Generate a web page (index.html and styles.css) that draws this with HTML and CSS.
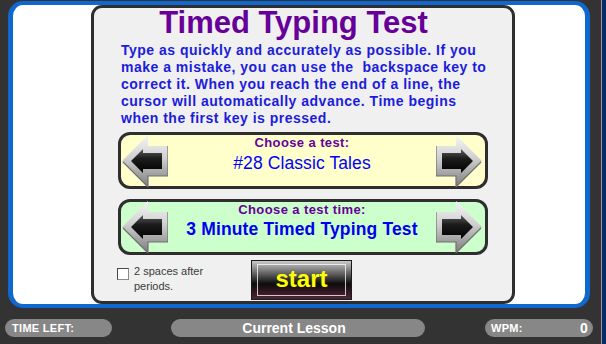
FILE: index.html
```html
<!DOCTYPE html>
<html>
<head>
<meta charset="utf-8">
<title>Timed Typing Test</title>
<link rel="stylesheet" href="styles.css">
</head>
<body>
<div class="app">
  <div class="frame">
    <div class="panel">
      <h1 class="title">Timed Typing Test</h1>
      <p class="intro">Type as quickly and accurately as possible. If you<br>make a mistake, you can use the&nbsp; backspace key to<br>correct it. When you reach the end of a line, the<br>cursor will automatically advance. Time begins<br>when the first key is pressed.</p>

      <div class="chooser yellow">
        <svg class="arrow" viewBox="0 0 46 52" width="46" height="52">
          <defs>
            <linearGradient id="silver" x1="0" y1="0" x2="0" y2="1">
              <stop offset="0" stop-color="#f6f6f6"/>
              <stop offset="0.45" stop-color="#cfcfcf"/>
              <stop offset="1" stop-color="#7c7c7c"/>
            </linearGradient>
            <linearGradient id="ink" x1="0" y1="0" x2="0" y2="1">
              <stop offset="0" stop-color="#5c5c5c"/>
              <stop offset="0.4" stop-color="#1c1c1c"/>
              <stop offset="1" stop-color="#000"/>
            </linearGradient>
          </defs>
          <path d="M0 26 L26 0 L26 11 L46 11 L46 41 L26 41 L26 52 Z" fill="url(#silver)"/>
          <path d="M1 27 L26 52 L26 41 L46 41 L46 11" fill="none" stroke="#707070" stroke-width="1.2"/>
          <path d="M9 26 L21 14 L21 18 L40 18 L40 34 L21 34 L21 38 Z" fill="url(#ink)"/>
        </svg>
        <div class="chooser-text">
          <div class="label">Choose a test:</div>
          <div class="value">#28 Classic Tales</div>
        </div>
        <svg class="arrow flip" viewBox="0 0 46 52" width="46" height="52">
          <path d="M0 26 L26 0 L26 11 L46 11 L46 41 L26 41 L26 52 Z" fill="url(#silver)"/>
          <path d="M1 27 L26 52 L26 41 L46 41 L46 11" fill="none" stroke="#707070" stroke-width="1.2"/>
          <path d="M9 26 L21 14 L21 18 L40 18 L40 34 L21 34 L21 38 Z" fill="url(#ink)"/>
        </svg>
      </div>

      <div class="chooser green">
        <svg class="arrow" viewBox="0 0 46 52" width="46" height="52">
          <path d="M0 26 L26 0 L26 11 L46 11 L46 41 L26 41 L26 52 Z" fill="url(#silver)"/>
          <path d="M1 27 L26 52 L26 41 L46 41 L46 11" fill="none" stroke="#707070" stroke-width="1.2"/>
          <path d="M9 26 L21 14 L21 18 L40 18 L40 34 L21 34 L21 38 Z" fill="url(#ink)"/>
        </svg>
        <div class="chooser-text">
          <div class="label">Choose a test time:</div>
          <div class="value bold">3 Minute Timed Typing Test</div>
        </div>
        <svg class="arrow flip" viewBox="0 0 46 52" width="46" height="52">
          <path d="M0 26 L26 0 L26 11 L46 11 L46 41 L26 41 L26 52 Z" fill="url(#silver)"/>
          <path d="M1 27 L26 52 L26 41 L46 41 L46 11" fill="none" stroke="#707070" stroke-width="1.2"/>
          <path d="M9 26 L21 14 L21 18 L40 18 L40 34 L21 34 L21 38 Z" fill="url(#ink)"/>
        </svg>
      </div>

      <div class="controls">
        <div class="option">
          <span class="checkbox"></span>
          <span class="option-text">2 spaces after<br>periods.</span>
        </div>
        <div class="start"><div class="start-inner">start</div></div>
      </div>
    </div>
  </div>

  <div class="statusbar">
    <div class="pill time">TIME LEFT:</div>
    <div class="pill lesson">Current Lesson</div>
    <div class="pill wpm"><span>WPM:</span><span class="wpm-value">0</span></div>
  </div>
</div>
</body>
</html>
```

FILE: styles.css
```css
html {
  background: linear-gradient(to right, #333333 601px, #9a9a9a 601px, #9a9a9a 602px, #0b2d66 602px);
}

body {
  margin: 0;
  width: 606px;
  height: 344px;
  overflow: hidden;
  font-family: "Liberation Sans", Arial, sans-serif;
}

.app {
  width: 601px;
}

.frame {
  box-sizing: border-box;
  margin: 1px 0 0 8px;
  width: 582px;
  height: 307px;
  border-style: solid;
  border-color: #0f67d0;
  border-width: 4px 5px;
  border-radius: 15px;
  background: #ffffff;
  padding-left: 78px;
}

.panel {
  box-sizing: border-box;
  width: 424px;
  height: 299px;
  background: #f0f0f0;
  border: 3px solid #2e2e2e;
  border-radius: 11px;
}

.title {
  margin: 0;
  padding-right: 19px;
  text-align: center;
  font-size: 31px;
  line-height: 30px;
  font-weight: bold;
  color: #660099;
}

.intro {
  margin: 4px 0 0;
  padding-left: 27px;
  font-size: 14px;
  line-height: 17px;
  font-weight: bold;
  letter-spacing: 0.5px;
  color: #1c1cdc;
  white-space: nowrap;
}

.chooser {
  box-sizing: border-box;
  width: 370px;
  height: 57px;
  margin: 5px auto 0;
  border: 3px solid #2e2e2e;
  border-radius: 12px;
  display: flex;
  align-items: center;
  padding: 0 3px 0 1px;
}

.yellow {
  background: #ffffcc;
}

.green {
  background: #ccffcc;
  height: 56px;
  margin-top: 10px;
}

.arrow {
  flex: none;
  display: block;
}

.flip {
  transform: scaleX(-1);
}

.chooser-text {
  flex: 1;
  align-self: stretch;
  display: flex;
  flex-direction: column;
  text-align: center;
  white-space: nowrap;
}

.label {
  font-size: 13px;
  line-height: 16px;
  font-weight: bold;
  letter-spacing: 0.4px;
  color: #660099;
}

.value {
  font-size: 17.5px;
  line-height: 24px;
  color: #0000ff;
  letter-spacing: 0.1px;
}

.value.bold {
  font-weight: bold;
  color: #0000ee;
  line-height: 22px;
  letter-spacing: 0.15px;
}

.controls {
  display: flex;
  align-items: flex-start;
  margin-top: 5px;
  padding-left: 23px;
}

.option {
  display: flex;
  align-items: flex-start;
  width: 134px;
  margin-top: 4px;
  font-size: 11px;
  line-height: 15px;
  color: #3a3a3a;
}

.checkbox {
  flex: none;
  box-sizing: border-box;
  width: 12px;
  height: 12px;
  margin: 4px 5px 0 0;
  background: #ffffff;
  border: 1px solid #8a8a8a;
  border-top-color: #4a4a4a;
  border-left-color: #4a4a4a;
}

.start {
  box-sizing: border-box;
  width: 101px;
  height: 40px;
  padding: 3px 5px;
  border: 1px solid #1a1a1a;
  background: linear-gradient(to bottom, #cacaca 0%, #8c8c8c 20%, #3a3a3a 45%, #0d0d0d 60%, #2a141c 76%, #4e2838 100%);
}

.start-inner {
  box-sizing: border-box;
  height: 100%;
  display: flex;
  align-items: center;
  justify-content: center;
  border: 1px solid rgba(255, 255, 255, 0.75);
  font-size: 24px;
  font-weight: bold;
  color: #ffff00;
  padding-bottom: 2px;
}

.statusbar {
  display: flex;
  align-items: flex-start;
  height: 36px;
  padding: 11px 0 0 5px;
  box-sizing: border-box;
}

.pill {
  box-sizing: border-box;
  height: 18px;
  border-radius: 9px;
  background: #878787;
  color: #ffffff;
  font-weight: bold;
  display: flex;
  align-items: center;
  white-space: nowrap;
}

.time {
  width: 107px;
  padding-left: 7px;
  font-size: 11px;
  letter-spacing: 0.3px;
}

.lesson {
  width: 254px;
  margin-left: 59px;
  justify-content: center;
  font-size: 14px;
  padding-right: 8px;
}

.wpm {
  width: 108px;
  margin-left: 60px;
  padding: 0 5px 0 6px;
  justify-content: space-between;
  font-size: 11px;
  letter-spacing: 0.3px;
}

.wpm-value {
  font-size: 14px;
}
```
